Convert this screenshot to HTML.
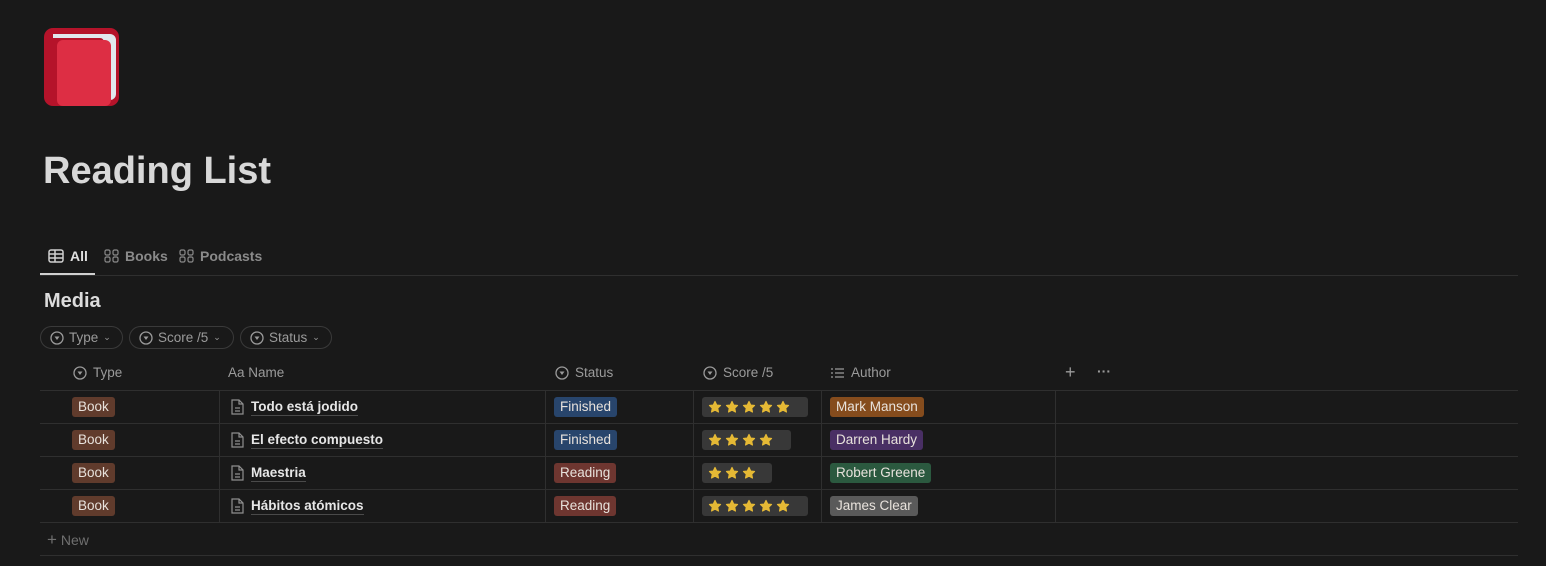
<!DOCTYPE html>
<html><head><meta charset="utf-8"><style>
*{box-sizing:border-box;margin:0;padding:0}
body{width:1546px;height:566px;background:#191919;color:#d4d4d4;font-family:"Liberation Sans",sans-serif;position:relative;overflow:hidden}
.a{position:absolute}
.hl{position:absolute;height:1px;background:#2f2f2f}
.vl{position:absolute;width:1px;background:#2f2f2f}
.tag{position:absolute;height:20px;line-height:20px;padding:0 6px;border-radius:3px;font-size:13.5px;color:#e8e2dc;white-space:nowrap}
.hd{position:absolute;top:365px;font-size:13.5px;color:#9b9b9b;display:flex;align-items:center;gap:6px}
.nm{position:absolute;font-size:13.5px;font-weight:bold;color:#e6e6e6;display:flex;align-items:center;gap:7px}
.nm span{border-bottom:1px solid #4a4a4a;line-height:17px}
.pill{position:absolute;top:326px;height:23px;border:1px solid #3a3a3a;border-radius:12px;font-size:13.5px;color:#9b9b9b;display:flex;align-items:center;gap:5px;padding:0 8px 0 9px}
.star{display:flex;gap:3px;align-items:center;padding:0 6px;background:#383838}
</style></head><body>
<svg class="a" style="left:44px;top:28px" width="76" height="78" viewBox="0 0 76 78">
<rect x="0" y="0" width="75" height="78" rx="9" fill="#b5132a"/>
<path d="M9 6 H66 a6 6 0 0 1 6 6 V66 a6 6 0 0 1-6 6 H60 V14 a4 4 0 0 0-4-4 H9 Z" fill="#e1e8ed"/>
<rect x="13" y="12" width="54" height="66" rx="6" fill="#dd2e44"/>
</svg>
<div class="a" style="left:43px;top:150px;font-size:38px;font-weight:bold;color:#d8d8d8">Reading List</div>
<div class="a" style="left:48px;top:248px;font-size:14px;font-weight:bold;color:#e0e0e0;display:flex;align-items:center;gap:6px">
<svg width="16" height="14" viewBox="0 0 16 14"><rect x="1" y="1" width="14" height="12" rx="2" fill="none" stroke="#d0d0d0" stroke-width="1.5"/><path d="M1 5H15M1 9H15M7 1V13" stroke="#d0d0d0" stroke-width="1.5"/></svg>All</div>
<div class="a" style="left:104px;top:248px;font-size:14px;font-weight:bold;color:#8a8a8a;display:flex;align-items:center;gap:6px">
<svg width="15" height="14" viewBox="0 0 15 14" fill="none" stroke="#8a8a8a" stroke-width="1.2"><rect x="1" y="1" width="5" height="5" rx="1.5"/><rect x="9" y="1" width="5" height="5" rx="1.5"/><rect x="1" y="8" width="5" height="5" rx="1.5"/><rect x="9" y="8" width="5" height="5" rx="1.5"/></svg>Books</div>
<div class="a" style="left:179px;top:248px;font-size:14px;font-weight:bold;color:#8a8a8a;display:flex;align-items:center;gap:6px">
<svg width="15" height="14" viewBox="0 0 15 14" fill="none" stroke="#8a8a8a" stroke-width="1.2"><rect x="1" y="1" width="5" height="5" rx="1.5"/><rect x="9" y="1" width="5" height="5" rx="1.5"/><rect x="1" y="8" width="5" height="5" rx="1.5"/><rect x="9" y="8" width="5" height="5" rx="1.5"/></svg>Podcasts</div>
<div class="hl" style="left:40px;top:275px;width:1478px"></div>
<div class="a" style="left:40px;top:273px;width:55px;height:2px;background:#d0d0d0"></div>
<div class="a" style="left:44px;top:290px;font-size:20px;font-weight:bold;color:#dcdcdc">Media</div>

<div class="pill" style="left:40px;width:83px"><svg width="14" height="14" viewBox="0 0 14 14"><circle cx="7" cy="7" r="6" fill="none" stroke="#9b9b9b" stroke-width="1.3"/><path d="M4.5 5.5H9.5L7 9Z" fill="#9b9b9b"/></svg>Type <span style="font-size:9px">&#8964;</span></div>
<div class="pill" style="left:129px;width:105px"><svg width="14" height="14" viewBox="0 0 14 14"><circle cx="7" cy="7" r="6" fill="none" stroke="#9b9b9b" stroke-width="1.3"/><path d="M4.5 5.5H9.5L7 9Z" fill="#9b9b9b"/></svg>Score /5 <span style="font-size:9px">&#8964;</span></div>
<div class="pill" style="left:240px;width:92px"><svg width="14" height="14" viewBox="0 0 14 14"><circle cx="7" cy="7" r="6" fill="none" stroke="#9b9b9b" stroke-width="1.3"/><path d="M4.5 5.5H9.5L7 9Z" fill="#9b9b9b"/></svg>Status <span style="font-size:9px">&#8964;</span></div>

<div class="hd" style="left:73px"><svg width="14" height="14" viewBox="0 0 14 14"><circle cx="7" cy="7" r="6" fill="none" stroke="#9b9b9b" stroke-width="1.3"/><path d="M4.5 5.5H9.5L7 9Z" fill="#9b9b9b"/></svg>Type</div>
<div class="hd" style="left:228px">Aa Name</div>
<div class="hd" style="left:555px"><svg width="14" height="14" viewBox="0 0 14 14"><circle cx="7" cy="7" r="6" fill="none" stroke="#9b9b9b" stroke-width="1.3"/><path d="M4.5 5.5H9.5L7 9Z" fill="#9b9b9b"/></svg>Status</div>
<div class="hd" style="left:703px"><svg width="14" height="14" viewBox="0 0 14 14"><circle cx="7" cy="7" r="6" fill="none" stroke="#9b9b9b" stroke-width="1.3"/><path d="M4.5 5.5H9.5L7 9Z" fill="#9b9b9b"/></svg>Score /5</div>
<div class="hd" style="left:830px"><svg width="15" height="12" viewBox="0 0 15 12" stroke="#9b9b9b" stroke-width="1.3"><path d="M1 2H3M1 6H3M1 10H3M5 2H14M5 6H14M5 10H14"/></svg>Author</div>
<div class="hd" style="left:1065px;font-size:18px;top:362px">+</div>
<div class="hd" style="left:1097px;font-size:14px;top:363px;font-weight:bold">···</div>

<div class="hl" style="left:40px;top:390px;width:1478px"></div>
<div class="hl" style="left:40px;top:423px;width:1478px"></div>
<div class="hl" style="left:40px;top:456px;width:1478px"></div>
<div class="hl" style="left:40px;top:489px;width:1478px"></div>
<div class="hl" style="left:40px;top:522px;width:1478px"></div>
<div class="hl" style="left:40px;top:555px;width:1478px"></div>
<div class="vl" style="left:219px;top:390px;height:132px"></div>
<div class="vl" style="left:545px;top:390px;height:132px"></div>
<div class="vl" style="left:693px;top:390px;height:132px"></div>
<div class="vl" style="left:821px;top:390px;height:132px"></div>
<div class="vl" style="left:1055px;top:390px;height:132px"></div>

<div class="tag" style="left:72px;top:397px;background:#603b2c">Book</div>
<div class="tag" style="left:72px;top:430px;background:#603b2c">Book</div>
<div class="tag" style="left:72px;top:463px;background:#603b2c">Book</div>
<div class="tag" style="left:72px;top:496px;background:#603b2c">Book</div>

<div class="nm" style="left:230px;top:398px"><svg width="14" height="16" viewBox="0 0 14 16" fill="none" stroke="#8f8f8f" stroke-width="1.2"><path d="M2 1H9L13 5V15H2Z M9 1V5H13 M5 9H10M5 12H10"/></svg><span>Todo está jodido</span></div>
<div class="nm" style="left:230px;top:431px"><svg width="14" height="16" viewBox="0 0 14 16" fill="none" stroke="#8f8f8f" stroke-width="1.2"><path d="M2 1H9L13 5V15H2Z M9 1V5H13 M5 9H10M5 12H10"/></svg><span>El efecto compuesto</span></div>
<div class="nm" style="left:230px;top:464px"><svg width="14" height="16" viewBox="0 0 14 16" fill="none" stroke="#8f8f8f" stroke-width="1.2"><path d="M2 1H9L13 5V15H2Z M9 1V5H13 M5 9H10M5 12H10"/></svg><span>Maestria</span></div>
<div class="nm" style="left:230px;top:497px"><svg width="14" height="16" viewBox="0 0 14 16" fill="none" stroke="#8f8f8f" stroke-width="1.2"><path d="M2 1H9L13 5V15H2Z M9 1V5H13 M5 9H10M5 12H10"/></svg><span>Hábitos atómicos</span></div>

<div class="tag" style="left:554px;top:397px;background:#28456c">Finished</div>
<div class="tag" style="left:554px;top:430px;background:#28456c">Finished</div>
<div class="tag" style="left:554px;top:463px;background:#6e3630">Reading</div>
<div class="tag" style="left:554px;top:496px;background:#6e3630">Reading</div>

<svg width="0" height="0" style="position:absolute"><defs><symbol id="s" viewBox="0 0 24 24"><path d="M12 2.5l2.9 6.1 6.6.8-4.9 4.6 1.3 6.6L12 17.3l-5.9 3.3 1.3-6.6-4.9-4.6 6.6-.8z" fill="#e5b935" stroke="#e5b935" stroke-width="2" stroke-linejoin="round"/></symbol></defs></svg>
<div class="tag star" style="left:702px;top:397px;width:106px"><svg width="14" height="14"><use href="#s"/></svg><svg width="14" height="14"><use href="#s"/></svg><svg width="14" height="14"><use href="#s"/></svg><svg width="14" height="14"><use href="#s"/></svg><svg width="14" height="14"><use href="#s"/></svg></div>
<div class="tag star" style="left:702px;top:430px;width:89px"><svg width="14" height="14"><use href="#s"/></svg><svg width="14" height="14"><use href="#s"/></svg><svg width="14" height="14"><use href="#s"/></svg><svg width="14" height="14"><use href="#s"/></svg></div>
<div class="tag star" style="left:702px;top:463px;width:70px"><svg width="14" height="14"><use href="#s"/></svg><svg width="14" height="14"><use href="#s"/></svg><svg width="14" height="14"><use href="#s"/></svg></div>
<div class="tag star" style="left:702px;top:496px;width:106px"><svg width="14" height="14"><use href="#s"/></svg><svg width="14" height="14"><use href="#s"/></svg><svg width="14" height="14"><use href="#s"/></svg><svg width="14" height="14"><use href="#s"/></svg><svg width="14" height="14"><use href="#s"/></svg></div>

<div class="tag" style="left:830px;top:397px;background:#854c1d">Mark Manson</div>
<div class="tag" style="left:830px;top:430px;background:#492f64">Darren Hardy</div>
<div class="tag" style="left:830px;top:463px;background:#2b593f">Robert Greene</div>
<div class="tag" style="left:830px;top:496px;background:#5a5a5a">James Clear</div>

<div class="a" style="left:47px;top:530px;font-size:14px;color:#6f6f6f"><span style="font-size:17px">+</span> New</div>
</body></html>
